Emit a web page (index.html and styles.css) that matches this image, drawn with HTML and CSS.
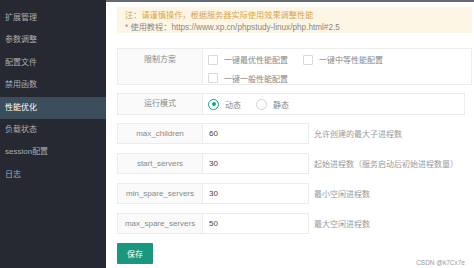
FILE: index.html
```html
<!DOCTYPE html>
<html>
<head>
<meta name="viewport" content="width=device-width, initial-scale=1">
<link rel="stylesheet" href="styles.css">
</head>
<body>
<div class="layout">
  <div class="sidebar">
    <div class="nav-item">扩展管理</div>
    <div class="nav-item">参数调整</div>
    <div class="nav-item">配置文件</div>
    <div class="nav-item">禁用函数</div>
    <div class="nav-item active">性能优化</div>
    <div class="nav-item">负载状态</div>
    <div class="nav-item">session配置</div>
    <div class="nav-item">日志</div>
  </div>

  <div class="main">
    <div class="notice">
      <div class="warn">注：请谨慎操作，根据服务器实际使用效果调整性能</div>
      <div class="tip">* 使用教程：https://www.xp.cn/phpstudy-linux/php.html#2.5</div>
    </div>

    <div class="row row-plan">
      <div class="label">限制方案</div>
      <div class="options">
        <label class="check"><span class="box"></span>一键最优性能配置</label>
        <label class="check"><span class="box"></span>一键中等性能配置</label>
        <label class="check"><span class="box"></span>一键一般性能配置</label>
      </div>
    </div>

    <div class="row row-mode">
      <div class="label">运行模式</div>
      <div class="radios">
        <label class="radio checked"><span class="dot"></span>动态</label>
        <label class="radio"><span class="dot"></span>静态</label>
      </div>
    </div>

    <div class="field">
      <div class="row row-input">
        <div class="label">max_children</div>
        <div class="value">60</div>
      </div>
      <span class="help">允许创建的最大子进程数</span>
    </div>

    <div class="field">
      <div class="row row-input">
        <div class="label">start_servers</div>
        <div class="value">30</div>
      </div>
      <span class="help">起始进程数（服务启动后初始进程数量）</span>
    </div>

    <div class="field">
      <div class="row row-input">
        <div class="label">min_spare_servers</div>
        <div class="value">30</div>
      </div>
      <span class="help">最小空闲进程数</span>
    </div>

    <div class="field">
      <div class="row row-input">
        <div class="label">max_spare_servers</div>
        <div class="value">50</div>
      </div>
      <span class="help">最大空闲进程数</span>
    </div>

    <div class="footer">
      <button class="save">保存</button>
      <span class="mark">CSDN @k7Cx7e</span>
    </div>
  </div>
</div>
</body>
</html>
```

FILE: styles.css
```css
* {box-sizing: border-box;}

body {
  margin: 0;
  font-family: "Liberation Sans", "Noto Sans CJK SC", sans-serif;
  font-size: 8px;
  color: #777;
  background: #fff;
}

.layout {
  display: flex;
  height: 268px;
  overflow: hidden;
}

.sidebar {
  width: 106px;
  flex-shrink: 0;
  background-color: #262931;
  padding-top: 7px;
}

.nav-item {
  height: 22.4px;
  line-height: 22.4px;
  padding-left: 5px;
  color: #a9adb3;
  font-size: 8px;
}

.nav-item.active {
  background-color: #3c4e5b;
  color: #fff;
}

.main {
  flex: 1;
  border-top: 2px solid #646a73;
  padding: 5px 2px 0 11px;
}

.notice {
  height: 26px;
  background-color: #fdf6e4;
  padding: 3px 8px 0;
  font-size: 8.2px;
  line-height: 12px;
}

.notice .warn {
  color: #d9a54e;
}

.notice .tip {
  color: #888;
}

.row {
  display: flex;
  border: 1px solid #ececec;
}

.label {
  width: 85px;
  flex-shrink: 0;
  background-color: #fafafa;
  border-right: 1px solid #ececec;
  text-align: center;
  color: #888;
}

.row-plan {
  margin-top: 15px;
  height: 37px;
}

.row-plan .label {
  padding-top: 4px;
}

.options {
  display: flex;
  flex-wrap: wrap;
  width: 200px;
  padding: 5px 0 0 5px;
  row-gap: 7px;
}

.check {
  display: flex;
  align-items: center;
  width: 95px;
  height: 11px;
  color: #888;
}

.check .box {
  width: 10px;
  height: 10px;
  border: 1px solid #d9d9d9;
  border-radius: 1px;
  margin-right: 6px;
  background: #fff;
}

.row-mode {
  margin-top: 8px;
  height: 22px;
  margin-right: 7px;
}

.row-mode .label {
  line-height: 20px;
}

.radios {
  display: flex;
  align-items: center;
  padding-left: 5px;
}

.radio {
  display: flex;
  align-items: center;
  margin-right: 15px;
  color: #888;
}

.radio .dot {
  width: 11px;
  height: 11px;
  border: 1px solid #d2d2d2;
  border-radius: 50%;
  margin-right: 6px;
  position: relative;
}

.radio.checked .dot {
  border-color: #19a286;
}

.radio.checked .dot::after {
  content: "";
  position: absolute;
  left: 2.5px;
  top: 2.5px;
  width: 4px;
  height: 4px;
  border-radius: 50%;
  background: #19a286;
}

.field {
  display: flex;
  align-items: center;
  margin-top: 8px;
  height: 21px;
}

.field + .field {
  margin-top: 9px;
}

.row-input {
  height: 21px;
  width: 192px;
  line-height: 19px;
}

.value {
  flex: 1;
  padding-left: 6px;
  color: #444;
}

.help {
  margin-left: 5px;
  color: #999;
}

.footer {
  display: flex;
  justify-content: space-between;
  align-items: flex-end;
  margin-top: 9px;
  padding-right: 7px;
}

.save {
  width: 36px;
  height: 21px;
  border: none;
  border-radius: 1px;
  background-color: #19987f;
  color: #fff;
  font-family: "Liberation Sans", "Noto Sans CJK SC", sans-serif;
  font-size: 8px;
  padding: 0;
}

.mark {
  font-size: 6.5px;
  color: #999;
  margin-bottom: -2px;
}
```
